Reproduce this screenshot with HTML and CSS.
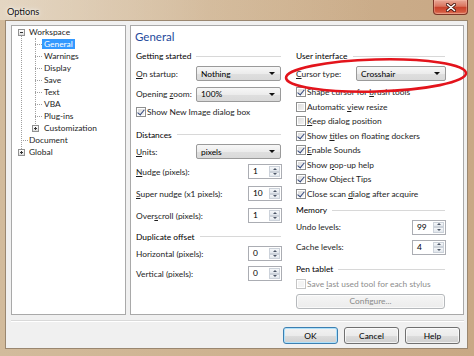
FILE: index.html
```html
<!DOCTYPE html>
<html lang="en">
<head>
  <meta charset="UTF-8" />
  <meta name="viewport" content="width=device-width, initial-scale=1.0"/>
  <title>Options</title>
  <link rel="stylesheet" href="styles.css">
</head>
<body>

<div class="window">
  <div class="titlebar">
    <span class="title">Options</span>
    <div class="close-btn">
      <svg width="10" height="9" viewBox="0 0 10 9">
        <path d="M1.5 1.5 L8.5 7.5 M8.5 1.5 L1.5 7.5" stroke="#4a1a12" stroke-width="3.2" stroke-linecap="round"/>
        <path d="M1.5 1.5 L8.5 7.5 M8.5 1.5 L1.5 7.5" stroke="#fff" stroke-width="1.6" stroke-linecap="round"/>
      </svg>
    </div>
  </div>

  <div class="client">
    <div class="panes">

      <div class="tree">
        <div class="node">
          <span class="gutter"><span class="toggle"></span></span>
          <span class="label">Workspace</span>
        </div>
        <div class="children">
          <div class="node leaf"><span class="gutter"></span><span class="label selected">General</span></div>
          <div class="node leaf"><span class="gutter"></span><span class="label">Warnings</span></div>
          <div class="node leaf"><span class="gutter"></span><span class="label">Display</span></div>
          <div class="node leaf"><span class="gutter"></span><span class="label">Save</span></div>
          <div class="node leaf"><span class="gutter"></span><span class="label">Text</span></div>
          <div class="node leaf"><span class="gutter"></span><span class="label">VBA</span></div>
          <div class="node leaf"><span class="gutter"></span><span class="label">Plug-ins</span></div>
          <div class="node">
            <span class="gutter"><span class="toggle plus"></span></span>
            <span class="label">Customization</span>
          </div>
        </div>
        <div class="node leaf"><span class="gutter"></span><span class="label">Document</span></div>
        <div class="node">
          <span class="gutter"><span class="toggle plus"></span></span>
          <span class="label">Global</span>
        </div>
      </div>

      <div class="page">
        <div class="col col-left">
          <h1 class="page-title">General</h1>

          <div class="group-title">Getting started</div>
          <div class="field lead">
            <span class="field-label"><u>O</u>n startup:</span>
            <div class="combo combo-left">Nothing</div>
          </div>
          <div class="field">
            <span class="field-label">Opening <u>z</u>oom:</span>
            <div class="combo combo-left">100%</div>
          </div>
          <div class="check"><span class="box on"></span><span>Show New Image dialog box</span></div>

          <div class="group-title spaced">Distances</div>
          <div class="field snug">
            <span class="field-label"><u>U</u>nits:</span>
            <div class="combo combo-left">pixels</div>
          </div>
          <div class="field">
            <span class="field-label wide"><u>N</u>udge (pixels):</span>
            <div class="spin"><span class="spin-value">1</span><span class="spin-btns"><i class="up"></i><i class="down"></i></span></div>
          </div>
          <div class="field">
            <span class="field-label wide"><u>S</u>uper nudge (x1 pixels):</span>
            <div class="spin"><span class="spin-value">10</span><span class="spin-btns"><i class="up"></i><i class="down"></i></span></div>
          </div>
          <div class="field">
            <span class="field-label wide">Over<u>s</u>croll (pixels):</span>
            <div class="spin"><span class="spin-value">1</span><span class="spin-btns"><i class="up"></i><i class="down"></i></span></div>
          </div>

          <div class="group-title near">Duplicate offset</div>
          <div class="field snug">
            <span class="field-label wide">Horizontal (pixels):</span>
            <div class="spin"><span class="spin-value">0</span><span class="spin-btns"><i class="up"></i><i class="down"></i></span></div>
          </div>
          <div class="field">
            <span class="field-label wide">Vertical (pixels):</span>
            <div class="spin"><span class="spin-value">0</span><span class="spin-btns"><i class="up"></i><i class="down"></i></span></div>
          </div>
        </div>

        <div class="col col-right">
          <div class="title-spacer"></div>

          <div class="group-title">User interface</div>
          <div class="field lead">
            <span class="field-label"><u>C</u>ursor type:</span>
            <div class="combo combo-right">Crosshair</div>
          </div>
          <div class="check-list">
            <div class="check"><span class="box on"></span><span>Shape cursor for <u>b</u>rush tools</span></div>
            <div class="check"><span class="box"></span><span>Automatic <u>v</u>iew resize</span></div>
            <div class="check"><span class="box"></span><span><u>K</u>eep dialog position</span></div>
            <div class="check"><span class="box on"></span><span>Show <u>t</u>itles on floating dockers</span></div>
            <div class="check"><span class="box on"></span><span><u>E</u>nable Sounds</span></div>
            <div class="check"><span class="box on"></span><span>Show <u>p</u>op-up help</span></div>
            <div class="check"><span class="box on"></span><span>Show Object Tips</span></div>
            <div class="check"><span class="box on"></span><span>Close scan <u>d</u>ialog after acquire</span></div>
          </div>

          <div class="group-title tight">Memory</div>
          <div class="field snug">
            <span class="field-label wide">Undo levels:</span>
            <div class="spin"><span class="spin-value">99</span><span class="spin-btns"><i class="up"></i><i class="down"></i></span></div>
          </div>
          <div class="field">
            <span class="field-label wide">Cache levels:</span>
            <div class="spin"><span class="spin-value">4</span><span class="spin-btns"><i class="up"></i><i class="down"></i></span></div>
          </div>

          <div class="group-title near-3">Pen tablet</div>
          <div class="check disabled"><span class="box"></span><span>Save <u>l</u>ast used tool for each stylus</span></div>
          <button class="btn btn-wide" disabled>Configure...</button>
        </div>
      </div>

    </div>

    <div class="footer">
      <button class="btn default">OK</button>
      <button class="btn">Cancel</button>
      <button class="btn">Help</button>
    </div>
  </div>

  <svg class="markup" width="474" height="356" viewBox="0 0 474 356">
    <ellipse cx="376" cy="75.5" rx="90" ry="16" transform="rotate(-1.5 376 75.5)"
             fill="none" stroke="#e3141c" stroke-width="2.6"/>
  </svg>
</div>

</body>
</html>
```

FILE: styles.css
```css
* {
  box-sizing: border-box;
  margin: 0;
  padding: 0;
}

body {
  width: 474px;
  height: 356px;
  overflow: hidden;
  font-family: Lato, "Open Sans", sans-serif;
  font-size: 8.4px;
  color: #1e1e1e;
  background: #fff;
}

.window {
  position: relative;
  width: 474px;
  height: 356px;
  padding: 0 6px 7px 5px;
  display: flex;
  flex-direction: column;
  background: linear-gradient(to right, #d2bb9c 0%, #cdb08d 60%, #c8a885 100%);
}

/* title bar */

.titlebar {
  height: 22px;
  display: flex;
  align-items: flex-start;
  margin: 0 0 0 -5px;
  padding-left: 7px;
  background: linear-gradient(to right, rgba(240, 232, 220, 0.6) 0%, rgba(230, 215, 195, 0.25) 45%, rgba(0, 0, 0, 0) 80%);
}

.title {
  margin-top: 6px;
  font-size: 9.2px;
  color: #111;
  text-shadow: 0 0 6px rgba(255, 255, 255, 0.9), 0 0 3px rgba(255, 255, 255, 0.9);
}

.close-btn {
  margin-left: auto;
  width: 35px;
  height: 15px;
  display: flex;
  justify-content: center;
  align-items: center;
  border: 1px solid #7d3527;
  border-top: none;
  border-radius: 0 0 4px 4px;
  background: linear-gradient(#e8a896 0%, #d9755f 45%, #c8432c 52%, #d4593f 85%, #e08a70 100%);
  box-shadow: inset 0 0 0 1px rgba(255, 200, 180, 0.35);
}

/* client area */

.client {
  flex: 1;
  display: flex;
  flex-direction: column;
  padding: 4px 3px 2px 5px;
  background: #f0f0f0;
  border: 1px solid #9a8770;
}

.panes {
  display: flex;
  gap: 4px;
  height: 290px;
}

/* tree */

.tree {
  position: relative;
  width: 115px;
  padding-left: 6px;
  background: #fff;
  border: 1px solid #a9a9a9;
}

.tree::before {
  content: '';
  position: absolute;
  left: 9px;
  top: 9px;
  height: 114px;
  border-left: 1px dotted #a0a0a0;
}

.children {
  position: relative;
  margin-left: 14px;
}

.children::before {
  content: '';
  position: absolute;
  left: 3px;
  top: 0;
  height: 88px;
  border-left: 1px dotted #a0a0a0;
}

.node {
  height: 12px;
  display: flex;
  align-items: center;
  white-space: nowrap;
}

.gutter {
  position: relative;
  width: 11px;
  height: 100%;
  display: flex;
  align-items: center;
  flex-shrink: 0;
}

.children .gutter {
  width: 10px;
}

.leaf .gutter::before {
  content: '';
  position: absolute;
  left: 3px;
  top: 6px;
  width: 7px;
  border-top: 1px dotted #a0a0a0;
}

.toggle {
  position: relative;
  width: 7px;
  height: 7px;
  border: 1px solid #919191;
  background: linear-gradient(#fff, #dedede);
  z-index: 1;
}

.toggle::before {
  content: '';
  position: absolute;
  left: 1px;
  top: 2px;
  width: 3px;
  height: 1px;
  background: #333;
}

.toggle.plus::after {
  content: '';
  position: absolute;
  left: 2px;
  top: 1px;
  width: 1px;
  height: 3px;
  background: #333;
}

.label {
  line-height: 10px;
}

.children .label {
  padding: 0 2px;
}

.label.selected {
  background: #3399ff;
  color: #fff;
}

/* page */

.page {
  flex: 1;
  display: flex;
  gap: 14px;
  padding-left: 5px;
  background: #fff;
  border: 1px solid #a9a9a9;
}

.col {
  display: flex;
  flex-direction: column;
}

.col-left {
  width: 146px;
}

.col-right {
  width: 150px;
}

.page-title {
  height: 22px;
  line-height: 22px;
  margin-left: -1px;
  font-size: 11.5px;
  font-weight: normal;
  color: #1e4a9c;
}

.title-spacer {
  height: 22px;
}

.group-title {
  height: 16px;
  display: flex;
  align-items: center;
  color: #000;
  white-space: nowrap;
}

.group-title::after {
  content: '';
  flex: 1;
  height: 1px;
  margin-left: 5px;
  margin-right: 1px;
  background: #d8d8d8;
}

.group-title.spaced {
  margin-top: 7px;
}

.group-title.near {
  margin-top: 2px;
}

.group-title.tight {
  margin-top: 1px;
}

.group-title.near-3 {
  margin-top: 3px;
}

.field {
  height: 22px;
  display: flex;
  align-items: center;
  white-space: nowrap;
}

.field.lead {
  height: 19px;
}

.field.snug {
  height: 18px;
}

.field-label {
  width: 60px;
}

.field-label.wide {
  flex: 1;
}

.combo {
  height: 15px;
  display: flex;
  align-items: center;
  padding-left: 4px;
  border: 1px solid #9a9a9a;
  border-radius: 2px;
  background: linear-gradient(#f7f7f7 0%, #ececec 50%, #dfdfdf 51%, #d9d9d9 100%);
  color: #000;
}

.combo::after {
  content: '';
  margin-left: auto;
  margin-right: 5px;
  border-top: 3px solid #111;
  border-left: 3px solid transparent;
  border-right: 3px solid transparent;
}

.combo-left {
  width: 85px;
}

.combo-right {
  width: 90px;
}

.spin {
  width: 34px;
  height: 15px;
  display: flex;
  border: 1px solid #abadb3;
  background: #fff;
  color: #000;
}

.spin-value {
  flex: 1;
  padding-left: 4px;
  line-height: 13px;
}

.spin-btns {
  width: 12px;
  display: flex;
  flex-direction: column;
  padding: 1px 1px 1px 0;
}

.spin-btns i {
  flex: 1;
  display: flex;
  justify-content: center;
  align-items: center;
  border: 1px solid #ccd2da;
  background: linear-gradient(#f5f7f9, #e2e7ed);
}

.spin-btns i::before {
  content: '';
  border-left: 2px solid transparent;
  border-right: 2px solid transparent;
}

.spin-btns .up::before {
  border-bottom: 2px solid #4c5667;
}

.spin-btns .down::before {
  border-top: 2px solid #4c5667;
}

/* checkboxes */

.check-list {
  margin-top: 2px;
}

.check {
  height: 14.5px;
  display: flex;
  align-items: center;
  white-space: nowrap;
}

.box {
  position: relative;
  width: 10px;
  height: 10px;
  margin-right: 1px;
  border: 1px solid #8e8f8f;
  background: linear-gradient(135deg, #d9d9d9, #f6f6f6);
  box-shadow: inset 0 0 0 1px #fff;
  flex-shrink: 0;
}

.box.on::after {
  content: '';
  position: absolute;
  left: 2px;
  top: 0;
  width: 3px;
  height: 6px;
  border-right: 1.6px solid #33477d;
  border-bottom: 1.6px solid #33477d;
  transform: rotate(40deg);
}

.check.disabled {
  color: #8d8d8d;
}

.check.disabled .box {
  border-color: #c5c5c5;
  background: #f4f4f4;
}

/* buttons */

.btn {
  width: 55px;
  height: 17px;
  font-family: inherit;
  font-size: 8.4px;
  color: #000;
  border: 1px solid #707070;
  border-radius: 3px;
  background: linear-gradient(#f2f2f2 0%, #ebebeb 50%, #dddddd 51%, #cfcfcf 100%);
  box-shadow: inset 0 0 0 1px rgba(255, 255, 255, 0.7);
}

.btn.default {
  border-color: #3c7fb1;
  box-shadow: inset 0 0 0 1px #aee1fb;
}

.btn-wide {
  width: 149px;
  height: 15px;
  margin-top: 2px;
}

.btn:disabled {
  color: #8a8a8a;
  border-color: #b6b9bc;
  background: linear-gradient(#f5f5f5, #ececec);
}

.footer {
  margin-top: 5px;
  padding: 6px 4px 2px;
  display: flex;
  justify-content: flex-end;
  gap: 6px;
  border-top: 1px solid #d9d9d9;
  box-shadow: inset 0 1px #fff;
}

/* hand-drawn highlight over the screenshot */

.markup {
  position: absolute;
  top: 0;
  left: 0;
  pointer-events: none;
}
```
